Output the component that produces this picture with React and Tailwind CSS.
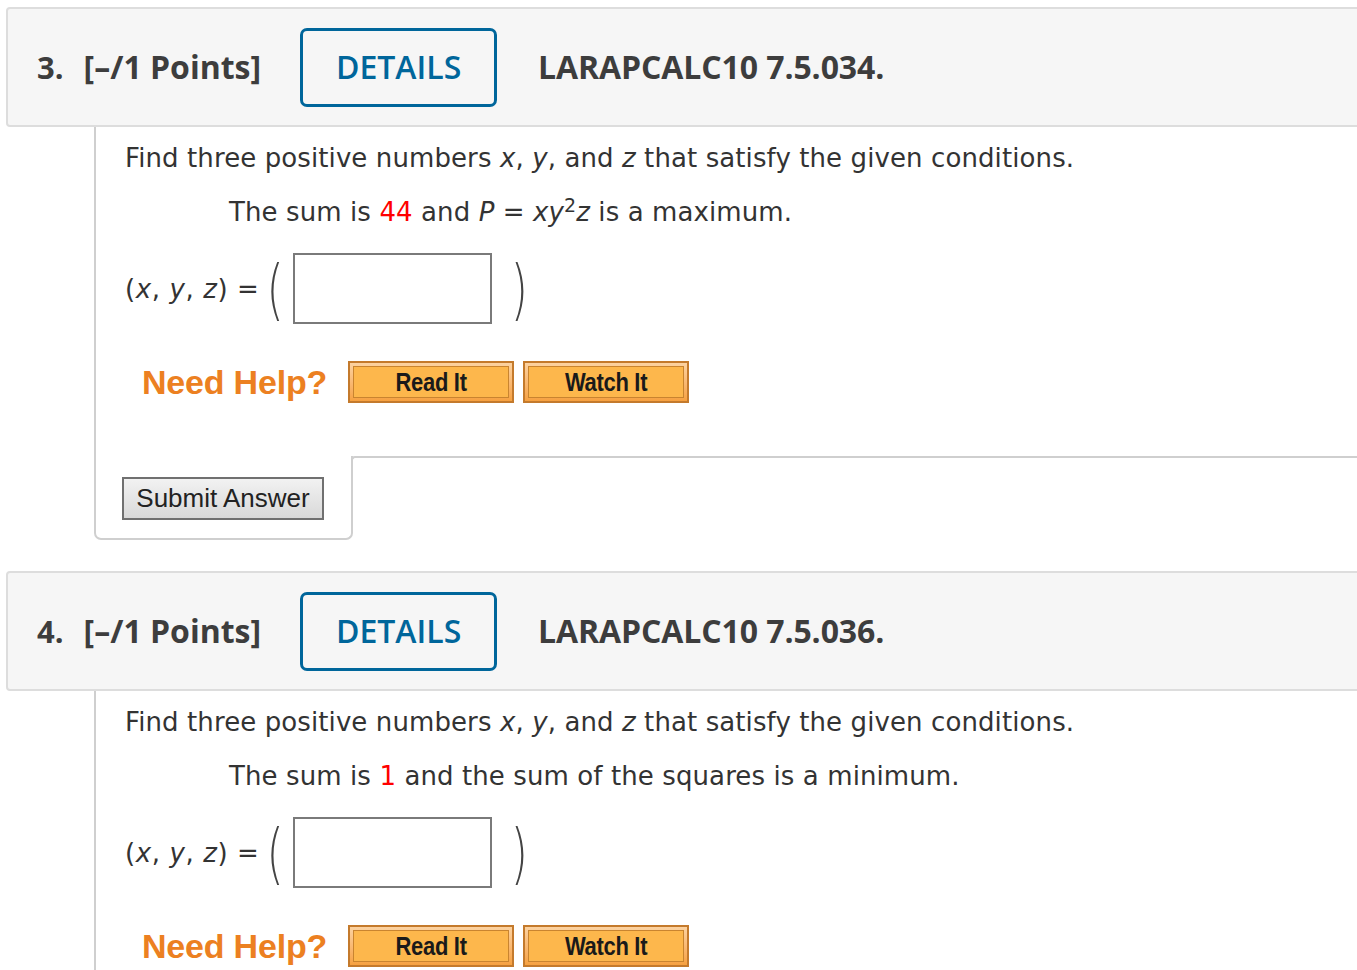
import React from 'react';

const body = { fontFamily: '"DejaVu Sans", Verdana, sans-serif' };
const head = { fontFamily: '"Open Sans", "Liberation Sans", sans-serif' };
const arial = { fontFamily: '"Liberation Sans", Arial, sans-serif' };

const Header = ({ num, code }) => (
  <div
    className="ml-[6px] mr-[-20px] h-[120px] flex items-center bg-[#f6f6f6] border-2 border-[#dddddd] rounded-[4px] text-[#3d3d3d]"
    style={head}
  >
    <span className="ml-[29px] text-[31px] font-bold">{num}.</span>
    <span className="ml-[20px] text-[32px] font-bold">[–/1 Points]</span>
    <div className="ml-[39px] w-[197px] h-[79px] flex items-center justify-center border-[3px] border-[#00669b] rounded-[7px] text-[#00669b] text-[32px] font-semibold">
      DETAILS
    </div>
    <span className="ml-[41px] text-[32px] font-bold tracking-[-0.1px]">{code}</span>
  </div>
);

const Paren = ({ children }) => (
  <span className="inline-block text-[44px] font-extralight text-[#444] scale-y-[1.5] leading-none">{children}</span>
);

const HelpButton = ({ label }) => (
  <div className="w-[166px] h-[42px] border-2 border-[#c47a2c] bg-gradient-to-b from-[#fcd2a0] to-[#f6a140] p-[3px]">
    <div className="h-full flex items-center justify-center border border-[#c9842f] bg-[#fdb74c] text-[22px] font-bold text-[#1a1a1a]" style={arial}>
      <span className="scale-y-[1.15] tracking-[-0.3px]">{label}</span>
    </div>
  </div>
);

const Question = ({ num, code, children, submit }) => (
  <div>
    <Header num={num} code={code} />
    <div className="ml-[94px] border-l-2 border-[#cfcfcf] pl-[29px] text-[#333] text-[26px]" style={body}>
      <p className="pt-[15px] leading-[32px] tracking-[0.1px]">
        Find three positive numbers <i>x</i>, <i>y</i>, and <i>z</i> that satisfy the given conditions.
      </p>
      <p className="pl-[104px] mt-[22px] leading-[32px] tracking-[0.1px]">{children}</p>
      <div className="mt-[25px] h-[70px] flex items-center">
        <span className="tracking-[0.6px] mt-[3px]">
          (<i>x</i>, <i>y</i>, <i>z</i>) =
        </span>
        <span className="ml-[7px] mt-[6px]">
          <Paren>(</Paren>
        </span>
        <div className="ml-[9px] w-[199px] h-[71px] border-2 border-[#7a7a7a] bg-white" />
        <span className="ml-[19px] mt-[6px]">
          <Paren>)</Paren>
        </span>
      </div>
      <div className="mt-[38px] h-[42px] flex items-center">
        <span className="ml-[17px] text-[34px] font-bold text-[#ec8021] tracking-[-0.2px]" style={arial}>
          Need Help?
        </span>
        <div className="ml-[21px] flex gap-[9px]">
          <HelpButton label="Read It" />
          <HelpButton label="Watch It" />
        </div>
      </div>
      {submit && <div className="h-[53px]" />}
      {!submit && <div className="h-[40px]" />}
    </div>
    {submit && (
      <div className="flex">
        <div className="ml-[94px] w-[259px] h-[84px] border-l-2 border-r-2 border-b-2 border-[#cfcfcf] rounded-b-[7px] pl-[26px] pt-[21px]">
          <button
            className="w-[202px] h-[43px] border-2 border-[#707070] bg-gradient-to-b from-[#f2f2f2] to-[#d9d9d9] text-[26px] text-[#222]"
            style={arial}
          >
            Submit Answer
          </button>
        </div>
        <div className="flex-1 -ml-[2px] h-[20px] border-t-2 border-l-2 border-[#cfcfcf] rounded-tl-[4px]" />
      </div>
    )}
  </div>
);

export default function App() {
  return (
    <div className="w-[1357px] h-[970px] overflow-hidden bg-white pt-[7px]">
      <Question num="3" code="LARAPCALC10 7.5.034." submit>
        The sum is <span className="text-[#ff0000]">44</span> and <i>P</i> = <i>xy</i>
        <sup className="text-[19px]">2</sup>
        <i>z</i> is a maximum.
      </Question>
      <div className="h-[31px]" />
      <Question num="4" code="LARAPCALC10 7.5.036.">
        The sum is <span className="text-[#ff0000]">1</span> and the sum of the squares is a minimum.
      </Question>
    </div>
  );
}
